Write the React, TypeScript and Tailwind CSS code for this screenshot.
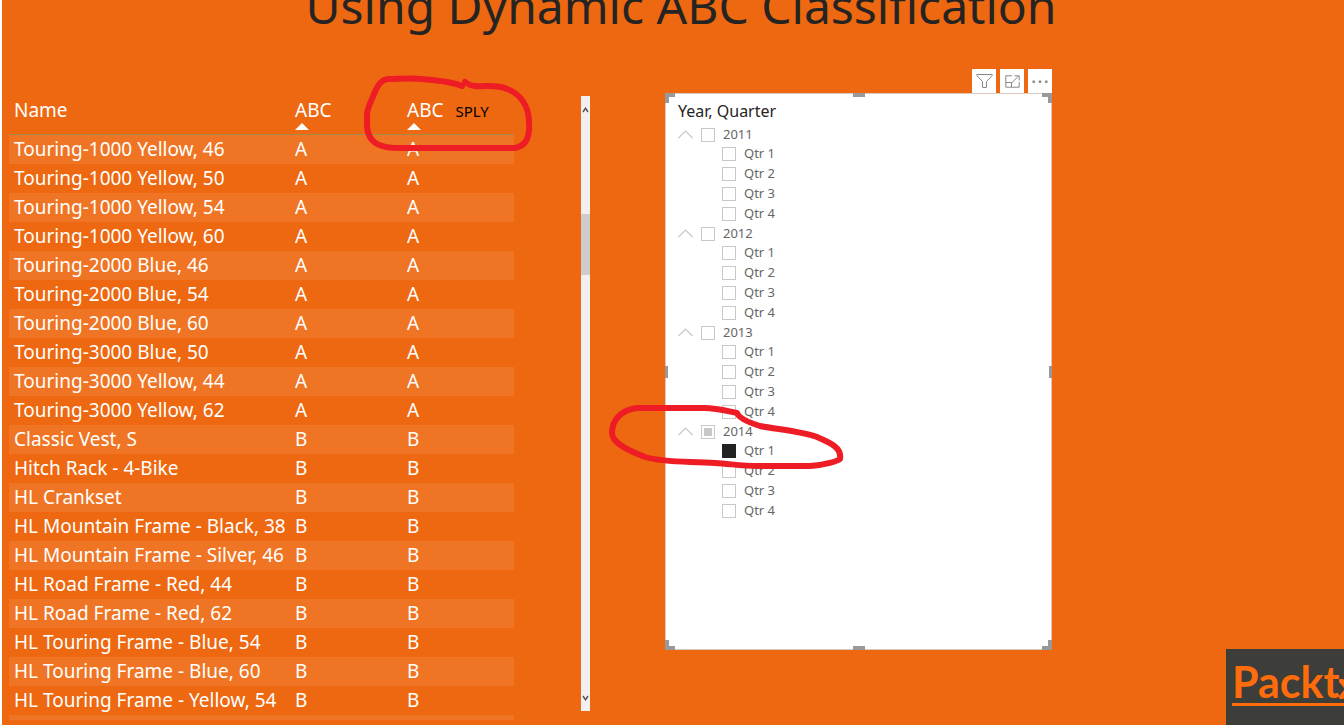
import React, { useEffect, useRef, useState } from 'react';

type Product = { name: string; abc: string; sply: string };

const classA = [
	'Touring-1000 Yellow, 46',
	'Touring-1000 Yellow, 50',
	'Touring-1000 Yellow, 54',
	'Touring-1000 Yellow, 60',
	'Touring-2000 Blue, 46',
	'Touring-2000 Blue, 54',
	'Touring-2000 Blue, 60',
	'Touring-3000 Blue, 50',
	'Touring-3000 Yellow, 44',
	'Touring-3000 Yellow, 62',
];

const classB = [
	'Classic Vest, S',
	'Hitch Rack - 4-Bike',
	'HL Crankset',
	'HL Mountain Frame - Black, 38',
	'HL Mountain Frame - Silver, 46',
	'HL Road Frame - Red, 44',
	'HL Road Frame - Red, 62',
	'HL Touring Frame - Blue, 54',
	'HL Touring Frame - Blue, 60',
	'HL Touring Frame - Yellow, 54',
];

const products: Product[] = [
	...classA.map((name) => ({ name, abc: 'A', sply: 'A' })),
	...classB.map((name) => ({ name, abc: 'B', sply: 'B' })),
];

const years = [2011, 2012, 2013, 2014];
const quarters = [1, 2, 3, 4];

const SortMark = () => (
	<svg className="block h-[7px] w-[14px]" viewBox="0 0 14 7">
		<path d="M0 7L7 0L14 7Z" fill="#fff" />
	</svg>
);

const ProductTable = () => (
	<table className="w-full table-fixed border-collapse text-left text-[19px] text-white">
		<colgroup>
			<col className="w-[281px]" />
			<col className="w-[112px]" />
			<col />
		</colgroup>
		<thead>
			<tr className="h-[37px] border-b border-[#a08a4c] align-top leading-[26px] whitespace-nowrap">
				<th className="pl-[5px] font-normal">Name</th>
				<th className="pl-[5px] font-normal">
					ABC
					<SortMark />
				</th>
				<th className="pl-[5px] font-normal">
					ABC<span className="ml-3 text-[15px] leading-none text-black">SPLY</span>
					<SortMark />
				</th>
			</tr>
		</thead>
		<tbody>
			{products.map((product) => (
				<tr
					key={product.name}
					className="h-[29px] leading-[29px] whitespace-nowrap odd:bg-[#ef7524]"
				>
					<td className="pl-[5px]">{product.name}</td>
					<td className="pl-[5px]">{product.abc}</td>
					<td className="pl-[5px]">{product.sply}</td>
				</tr>
			))}
			<tr className="h-[29px] bg-[#ef7524]">
				<td colSpan={3}></td>
			</tr>
		</tbody>
	</table>
);

const ScrollBar = () => (
	<div className="mt-[6px] mb-[14px] flex w-[9px] shrink-0 flex-col bg-[#f0f0f0]">
		<button aria-label="Scroll up" className="flex h-[27px] items-center justify-center">
			<svg className="h-[6px] w-[7px]" viewBox="0 0 7 6">
				<path d="M1 5L3.5 1.2L6 5" fill="none" stroke="#505050" strokeWidth="1.4" />
			</svg>
		</button>
		<div className="basis-[91px]"></div>
		<div className="h-[61px] bg-[#cdcdcd]"></div>
		<div className="grow"></div>
		<button aria-label="Scroll down" className="flex h-[27px] items-center justify-center">
			<svg className="h-[6px] w-[7px]" viewBox="0 0 7 6">
				<path d="M1 1L3.5 4.8L6 1" fill="none" stroke="#505050" strokeWidth="1.4" />
			</svg>
		</button>
	</div>
);

type CheckProps = {
	label: string;
	checked: boolean;
	partial?: boolean;
	onChange: () => void;
};

const Check = ({ label, checked, partial = false, onChange }: CheckProps) => {
	const ref = useRef<HTMLInputElement>(null);

	useEffect(() => {
		if (ref.current) ref.current.indeterminate = partial;
	}, [partial]);

	return (
		<label className="flex items-center gap-2 text-[13px] text-[#666]">
			<input
				ref={ref}
				type="checkbox"
				checked={checked}
				onChange={onChange}
				className="h-[14px] w-[14px] appearance-none border border-[#c8c8c8] bg-white checked:border-[#222] checked:bg-[#222] indeterminate:bg-[#c8c8c8] indeterminate:shadow-[inset_0_0_0_2px_#fff]"
			/>
			<span>{label}</span>
		</label>
	);
};

const Handles = () => (
	<>
		<span className="absolute -top-px -left-px h-[10px] w-[10px] border-t-4 border-l-4 border-[#999]"></span>
		<span className="absolute -top-px -right-px h-[10px] w-[10px] border-t-4 border-r-4 border-[#999]"></span>
		<span className="absolute -bottom-px -left-px h-[10px] w-[10px] border-b-4 border-l-4 border-[#999]"></span>
		<span className="absolute -right-px -bottom-px h-[10px] w-[10px] border-r-4 border-b-4 border-[#999]"></span>
		<span className="absolute -top-px left-1/2 h-1 w-3 -translate-x-1/2 bg-[#999]"></span>
		<span className="absolute -bottom-px left-1/2 h-1 w-3 -translate-x-1/2 bg-[#999]"></span>
		<span className="absolute top-1/2 -left-px h-3 w-[3px] -translate-y-1/2 bg-[#999]"></span>
		<span className="absolute top-1/2 -right-px h-3 w-[3px] -translate-y-1/2 bg-[#999]"></span>
	</>
);

const VisualToolbar = () => (
	<div className="flex justify-end gap-1">
		<button aria-label="Filters" className="flex h-6 w-6 items-center justify-center bg-white">
			<svg className="h-4 w-[17px]" viewBox="0 0 17 16" fill="none" stroke="#888">
				<path d="M0.8 1.5H16.2V2.5L10.5 8.5V14.5H6.5V8.5L0.8 2.5Z" />
			</svg>
		</button>
		<button aria-label="Focus mode" className="flex h-6 w-6 items-center justify-center bg-white">
			<svg className="h-[13px] w-[15px]" viewBox="0 0 15 13" fill="none" stroke="#888">
				<path d="M7 0.8H0.8V12.2H14.2V7M0.8 7.5H6.5V12.2M6.5 8L13.5 1M9.5 0.8H14.2V5.5" />
			</svg>
		</button>
		<button aria-label="More options" className="flex h-6 w-6 items-center justify-center bg-white">
			<svg className="h-[3px] w-4" viewBox="0 0 16 3" fill="#888">
				<path d="M0.5 0.5h2.4v2.4h-2.4zM6.8 0.5h2.4v2.4h-2.4zM13.1 0.5h2.4v2.4h-2.4z" />
			</svg>
		</button>
	</div>
);

const Slicer = () => {
	const [selected, setSelected] = useState<string[]>(['2014-1']);

	const toggle = (keys: string[]) => {
		const all = keys.every((key) => selected.includes(key));
		const rest = selected.filter((key) => !keys.includes(key));
		setSelected(all ? rest : [...rest, ...keys]);
	};

	return (
		<div className="relative h-[557px] border border-[#dcc8bc] bg-white pt-[7px] pl-3">
			<Handles />
			<h2 className="h-6 text-[16px] leading-5 text-[#252423]">Year, Quarter</h2>
			<ul>
				{years.map((year) => {
					const keys = quarters.map((quarter) => `${year}-${quarter}`);
					const count = keys.filter((key) => selected.includes(key)).length;

					return (
						<li key={year}>
							<div className="flex h-[19px] items-center gap-2">
								<button aria-label={`Collapse ${year}`}>
									<svg className="block h-[9px] w-[15px]" viewBox="0 0 15 9">
										<path d="M0.5 8L7.5 1L14.5 8" fill="none" stroke="#c8c8c8" strokeWidth="1.2" />
									</svg>
								</button>
								<Check
									label={`${year}`}
									checked={count == 4}
									partial={count > 0 && count < 4}
									onChange={() => toggle(keys)}
								/>
							</div>
							<ul className="pl-11">
								{quarters.map((quarter) => (
									<li key={quarter} className="flex h-5 items-center">
										<Check
											label={`Qtr ${quarter}`}
											checked={selected.includes(`${year}-${quarter}`)}
											onChange={() => toggle([`${year}-${quarter}`])}
										/>
									</li>
								))}
							</ul>
						</li>
					);
				})}
			</ul>
			{/* pen mark round the selected quarter */}
			<svg
				className="pointer-events-none absolute top-[307px] -left-[60px] h-[72px] w-[244px]"
				viewBox="606 401 244 72"
				fill="none"
				stroke="#ee1c24"
				strokeWidth="6"
				strokeLinecap="round"
				strokeLinejoin="round"
			>
				<path d="M737 413C727 411 717 408 704 408H637C621 410 612 420 612 433C612 444 632 452 645 457C665 463 690 461 715 463C732 464 740 466 760 466H810C825 465 838 461 840 459C842 448 831 443 817 437C800 431 775 429 760 426C747 422 739 418 737 413" />
			</svg>
		</div>
	);
};

export default function App() {
	return (
		<div className="relative flex h-screen flex-col overflow-hidden border-l-2 border-white bg-[#ed6810] font-['Noto_Sans',sans-serif]">
			<header className="flex h-[69px] shrink-0 justify-center pl-4">
				<h1 className="-mt-6 text-[48px] leading-[60px] whitespace-nowrap text-[#252423]">
					Using Dynamic ABC Classification
				</h1>
			</header>
			<main className="grid min-h-0 grow grid-cols-[656fr_387fr_292fr] pl-[7px]">
				<section className="relative mt-[21px] mr-[75px] flex min-h-0 gap-[67px]">
					<div className="mb-[5px] min-w-0 grow overflow-hidden pt-[7px]">
						<ProductTable />
					</div>
					<ScrollBar />
					{/* pen mark round the SPLY column title */}
					<svg
						className="pointer-events-none absolute -top-[16px] left-[351px] h-[84px] w-[180px]"
						viewBox="360 74 180 84"
						fill="none"
						stroke="#ee1c24"
						strokeWidth="6"
						strokeLinecap="round"
						strokeLinejoin="round"
					>
						<path d="M462 86C450 81 440 81 422 79C410 78 400 79 388 79C380 80 377 87 374 94C371 102 367 108 367 115C367 125 366 134 373 141C381 148 391 148 404 148H513C527 147 530 136 529 122C529 105 519 93 507 89C496 84 486 87 475 86C470 86 468 84 465 82" />
					</svg>
				</section>
				<section>
					<VisualToolbar />
					<Slicer />
				</section>
			</main>
			<div className="absolute right-0 bottom-0 h-[76px] w-[118px] overflow-hidden bg-[#3d3d3a] pt-3 pl-[6px]">
				<div className="flex w-[140px] items-end border-b-[3px] border-[#ff6c0c] font-['Lato',sans-serif] text-[43px] leading-[42px] font-bold text-[#ff6c0c]">
					Packt
					<svg className="mb-1 h-5 w-4 shrink-0" viewBox="0 0 16 20">
						<path d="M1 0L9 10L1 20" fill="none" stroke="#ff6c0c" strokeWidth="5" />
					</svg>
				</div>
			</div>
		</div>
	);
}
